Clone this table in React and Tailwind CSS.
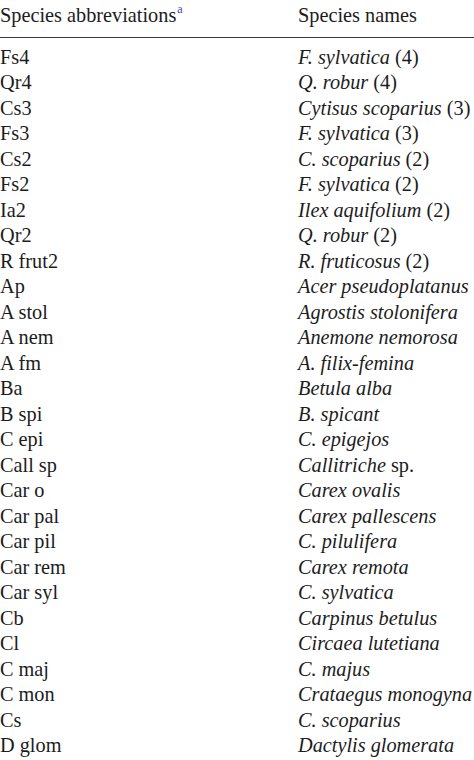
import React from 'react';

const rows = [
  ['Fs4', 'F. sylvatica', '(4)'],
  ['Qr4', 'Q. robur', '(4)'],
  ['Cs3', 'Cytisus scoparius', '(3)'],
  ['Fs3', 'F. sylvatica', '(3)'],
  ['Cs2', 'C. scoparius', '(2)'],
  ['Fs2', 'F. sylvatica', '(2)'],
  ['Ia2', 'Ilex aquifolium', '(2)'],
  ['Qr2', 'Q. robur', '(2)'],
  ['R frut2', 'R. fruticosus', '(2)'],
  ['Ap', 'Acer pseudoplatanus'],
  ['A stol', 'Agrostis stolonifera'],
  ['A nem', 'Anemone nemorosa'],
  ['A fm', 'A. filix-femina'],
  ['Ba', 'Betula alba'],
  ['B spi', 'B. spicant'],
  ['C epi', 'C. epigejos'],
  ['Call sp', 'Callitriche', 'sp.'],
  ['Car o', 'Carex ovalis'],
  ['Car pal', 'Carex pallescens'],
  ['Car pil', 'C. pilulifera'],
  ['Car rem', 'Carex remota'],
  ['Car syl', 'C. sylvatica'],
  ['Cb', 'Carpinus betulus'],
  ['Cl', 'Circaea lutetiana'],
  ['C maj', 'C. majus'],
  ['C mon', 'Crataegus monogyna'],
  ['Cs', 'C. scoparius'],
  ['D glom', 'Dactylis glomerata'],
];

export default function App() {
  return (
    <div className="w-[474px] h-[760px] overflow-hidden bg-white text-[#1c1c1c] text-[20.3px] leading-[25.5px] font-['Liberation_Serif','Times_New_Roman',serif]">
      <div className="grid grid-cols-[298px_1fr] pt-[3px] pb-[8.5px] border-b-[1.5px] border-[#3a3a3a]">
        <div className="whitespace-nowrap">
          Species abbreviations
          <span className="relative top-[-9px] text-[12px] text-[#3848c8] ml-[1px] leading-none">a</span>
        </div>
        <div>Species names</div>
      </div>
      <div className="pt-[6.5px]">
        {rows.map(([abbr, name, extra]) => (
          <div key={abbr} className="grid grid-cols-[298px_1fr] whitespace-nowrap">
            <div>{abbr}</div>
            <div>
              <i>{name}</i>
              {extra ? ' ' + extra : ''}
            </div>
          </div>
        ))}
      </div>
    </div>
  );
}
